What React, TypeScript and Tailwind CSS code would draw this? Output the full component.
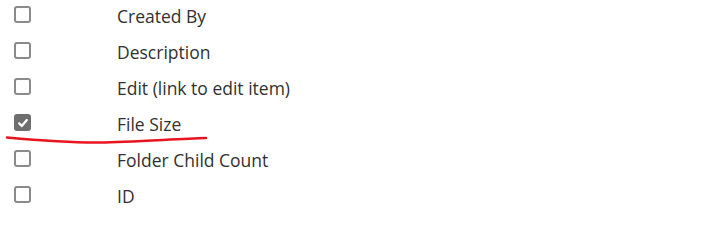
import React from 'react'

const columns = [
  { label: 'Created By', checked: false },
  { label: 'Description', checked: false },
  { label: 'Edit (link to edit item)', checked: false },
  { label: 'File Size', checked: true },
  { label: 'Folder Child Count', checked: false },
  { label: 'ID', checked: false },
]

function Box({ checked }: { checked: boolean }) {
  if (checked) {
    return (
      <span className="w-[17px] h-[17px] rounded-[3px] bg-[#6e6e6e] flex items-center justify-center shrink-0 mb-[3px]">
        <svg width="12" height="12" viewBox="0 0 12 12" fill="none">
          <path d="M2.2 6.4 L4.8 9 L9.8 3" stroke="#fff" strokeWidth="2.2" strokeLinecap="round" strokeLinejoin="round" />
        </svg>
      </span>
    )
  }
  return <span className="w-[17px] h-[17px] rounded-[3px] border-2 border-[#8a8a8a] bg-white shrink-0 mb-[3px]" />
}

export default function App() {
  return (
    <div className="relative w-[706px] h-[213px] bg-white overflow-hidden" style={{ fontFamily: '"Open Sans", "Noto Sans", sans-serif' }}>
      {/* Column list */}
      <div className="-mt-[2px] pl-[14px]">
        {columns.map((c) => (
          <div key={c.label} className="h-[36px] flex items-center">
            <Box checked={c.checked} />
            <span className="ml-[86px] text-[17.5px] text-[#323130]">{c.label}</span>
          </div>
        ))}
      </div>

      {/* red annotation underline */}
      <svg className="absolute top-0 left-0 pointer-events-none" width="706" height="213">
        <path d="M7 137.5 C 40 140.5, 70 142.8, 100 142.5 S 175 139, 206 138" stroke="#e8141e" strokeWidth="2.5" fill="none" strokeLinecap="round" />
      </svg>
    </div>
  )
}
